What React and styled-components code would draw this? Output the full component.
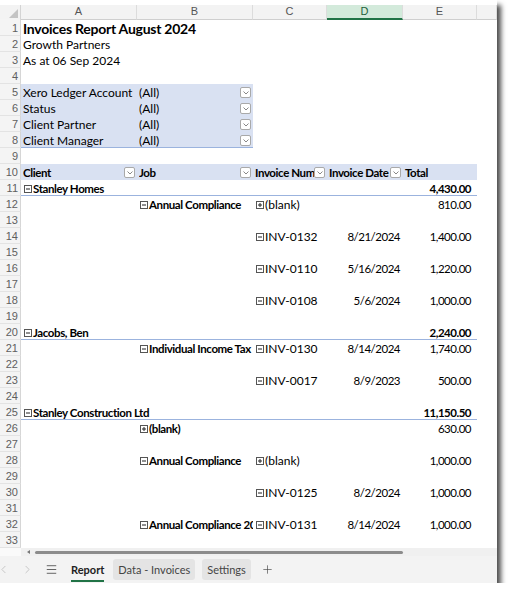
import React from 'react';
import styled, { createGlobalStyle } from 'styled-components';
import { ChevronLeft, ChevronRight, Menu, Plus } from 'lucide-react';

const GlobalStyle = createGlobalStyle`
  html, body {
    margin: 0;
    padding: 0;
    background: #fff;
  }
  body {
    font-family: 'Lato', 'Liberation Sans', sans-serif;
  }
`;

// row header, A..E, then the empty strip up to the window edge
const COLS = '21px 116px 116px 74px 76px 74px 1fr';
const LETTERS = ['A', 'B', 'C', 'D', 'E'];

// which row shows what (rows not listed stay empty)
const filter = (label, last) => ({
  a: { text: label, fill: true, line: last },
  b: { text: '(All)', fill: true, line: last, drop: true },
});

const group = (name, total) => ({
  a: { text: name, bold: true, icon: 'minus', line: true },
  b: { line: true },
  c: { line: true },
  d: { line: true },
  e: { text: total, bold: true, amount: true, line: true },
});

const invoice = (num, date, amount, extra = {}) => ({
  c: { text: num, icon: 'minus', clip: true },
  d: { text: date, date: true },
  e: { text: amount, amount: true },
  ...extra,
});

const ROWS = {
  1: { a: { text: 'Invoices Report August 2024', title: true } },
  2: { a: { text: 'Growth Partners' } },
  3: { a: { text: 'As at 06 Sep 2024' } },
  5: filter('Xero Ledger Account'),
  6: filter('Status'),
  7: filter('Client Partner'),
  8: filter('Client Manager', true),
  10: {
    a: { text: 'Client', bold: true, fill: true, drop: true },
    b: { text: 'Job', bold: true, fill: true, drop: true },
    c: { text: 'Invoice Number', bold: true, fill: true, drop: true },
    d: { text: 'Invoice Date', bold: true, fill: true, drop: true },
    e: { text: 'Total', bold: true, fill: true },
  },
  11: group('Stanley Homes', '4,430.00'),
  12: {
    b: { text: 'Annual Compliance', bold: true, icon: 'minus', clip: true },
    c: { text: '(blank)', icon: 'plus' },
    e: { text: '810.00', amount: true },
  },
  14: invoice('INV-0132', '8/21/2024', '1,400.00'),
  16: invoice('INV-0110', '5/16/2024', '1,220.00'),
  18: invoice('INV-0108', '5/6/2024', '1,000.00'),
  20: group('Jacobs, Ben', '2,240.00'),
  21: invoice('INV-0130', '8/14/2024', '1,740.00', {
    b: { text: 'Individual Income Tax', bold: true, icon: 'minus', clip: true },
  }),
  23: invoice('INV-0017', '8/9/2023', '500.00'),
  25: group('Stanley Construction Ltd', '11,150.50'),
  26: {
    b: { text: '(blank)', bold: true, icon: 'plus' },
    e: { text: '630.00', amount: true },
  },
  28: {
    b: { text: 'Annual Compliance', bold: true, icon: 'minus', clip: true },
    c: { text: '(blank)', icon: 'plus' },
    e: { text: '1,000.00', amount: true },
  },
  30: invoice('INV-0125', '8/2/2024', '1,000.00'),
  32: invoice('INV-0131', '8/14/2024', '1,000.00', {
    b: { text: 'Annual Compliance 2024', bold: true, icon: 'minus', clip: true },
  }),
};

const ExpandIcon = ({ plus }) => (
  <IconBox width="8" height="8" viewBox="0 0 8 8">
    <rect x="0.5" y="0.5" width="7" height="7" fill="#fff" stroke="#555" />
    <path d="M2 4h4" stroke="#222" />
    {plus && <path d="M4 2v4" stroke="#222" />}
  </IconBox>
);

const DropButton = () => (
  <Drop>
    <svg width="6" height="4" viewBox="0 0 6 4">
      <path d="M0.5 0.5L3 3l2.5-2.5" fill="none" stroke="#7a7a7a" strokeWidth="0.9" />
    </svg>
  </Drop>
);

const SheetCell = ({ cell = {} }) => {
  const { text, bold, title, icon, fill, line, clip, drop, amount, date } = cell;
  const kind = title ? 'title' : amount || date ? 'number' : bold ? 'bold' : 'plain';
  return (
    <Cell
      $fill={fill}
      $line={line}
      $clip={clip || drop}
      $right={amount || date}
      $pad={amount ? 6 : date ? 3 : 2}
    >
      {icon && <ExpandIcon plus={icon === 'plus'} />}
      {text && (
        <Label $kind={kind} $bold={bold || title} $shrink={drop}>
          {text}
        </Label>
      )}
      {drop && <DropButton />}
    </Cell>
  );
};

function App() {
  const rowNumbers = Array.from({ length: 33 }, (_, i) => i + 1);

  return (
    <>
      <GlobalStyle />
      <Window>
        <ColumnHeader>
          <Corner>
            <svg width="9" height="9" viewBox="0 0 9 9">
              <path d="M9 0V9H0Z" fill="#c4c4c4" />
            </svg>
          </Corner>
          {LETTERS.map((l) => (
            <ColLetter key={l} $active={l === 'D'}>
              {l}
            </ColLetter>
          ))}
          <ColLetter />
        </ColumnHeader>

        <Sheet>
          {rowNumbers.map((n) => {
            const row = ROWS[n] || {};
            return (
              <Row key={n} $tall={n === 1}>
                <RowNum>{n}</RowNum>
                <SheetCell cell={row.a} />
                <SheetCell cell={row.b} />
                <SheetCell cell={row.c} />
                <SheetCell cell={row.d} />
                <SheetCell cell={row.e} />
                <Cell />
              </Row>
            );
          })}
        </Sheet>

        <ScrollStrip>
          <ScrollTrack>
            <ScrollArrow />
            <ScrollThumb />
          </ScrollTrack>
        </ScrollStrip>

        <TabBar>
          <NavIcon $faint>
            <ChevronLeft size={13} strokeWidth={1.5} />
          </NavIcon>
          <NavIcon $faint>
            <ChevronRight size={13} strokeWidth={1.5} />
          </NavIcon>
          <NavIcon>
            <Menu size={13} strokeWidth={1.5} />
          </NavIcon>
          <Tab $active>Report</Tab>
          <Tab>Data - Invoices</Tab>
          <Tab>Settings</Tab>
          <NavIcon>
            <Plus size={13} strokeWidth={1.2} />
          </NavIcon>
        </TabBar>
      </Window>
    </>
  );
}

const Window = styled.div`
  width: 497px;
  height: 583px;
  box-sizing: border-box;
  padding-top: 5px;
  background: #fff;
  box-shadow: 4px 5px 5px rgba(0, 0, 0, 0.7);
  display: flex;
  flex-direction: column;
  overflow: hidden;
`;

const ColumnHeader = styled.div`
  display: grid;
  grid-template-columns: ${COLS};
  height: 14px;
  flex: none;
`;

const Corner = styled.div`
  background: #f3f3f3;
  border-right: 1px solid #d4d4d4;
  border-bottom: 1px solid #cfcfcf;
  box-sizing: border-box;
  display: flex;
  align-items: flex-end;
  justify-content: flex-end;
  padding: 0 2px 1px 0;
`;

const ColLetter = styled.div`
  background: ${(p) => (p.$active ? '#d3eadb' : '#f3f3f3')};
  border-right: 1px solid #dcdcdc;
  border-bottom: ${(p) => (p.$active ? '2px solid #217346' : '1px solid #cfcfcf')};
  box-sizing: border-box;
  color: ${(p) => (p.$active ? '#1f5f3a' : '#555')};
  font: 11px 'Liberation Sans', Arial, sans-serif;
  line-height: 13px;
  text-align: center;
`;

const Sheet = styled.div`
  display: flex;
  flex-direction: column;
  flex: none;
`;

const Row = styled.div`
  display: grid;
  grid-template-columns: ${COLS};
  height: ${(p) => (p.$tall ? 17 : 16)}px;
`;

const RowNum = styled.div`
  background: #f4f4f4;
  border-right: 1px solid #d6d6d6;
  border-bottom: 1px solid #e3e3e3;
  box-sizing: border-box;
  color: #5f5f5f;
  font: 11px 'Liberation Sans', Arial, sans-serif;
  display: flex;
  align-items: center;
  justify-content: flex-end;
  padding: 1px 2px 0 0;
`;

const Cell = styled.div`
  display: flex;
  align-items: center;
  justify-content: ${(p) => (p.$right ? 'flex-end' : 'flex-start')};
  min-width: 0;
  box-sizing: border-box;
  padding: 1px ${(p) => p.$pad || 2}px 0 2px;
  background: ${(p) => (p.$fill ? '#d9e1f2' : 'transparent')};
  box-shadow: ${(p) => (p.$line ? 'inset 0 -1px 0 #9bb3de' : 'none')};
  overflow: ${(p) => (p.$clip ? 'hidden' : 'visible')};
  white-space: nowrap;
`;

// Lato is wider than the sheet's font in bold and in digits, so those are tightened
const LABEL_FONTS = {
  title: 'font-size: 14px; letter-spacing: -0.25px;',
  bold: 'font-size: 11.5px; letter-spacing: -0.4px;',
  number: 'font-size: 11.5px; letter-spacing: -0.5px;',
  plain: 'font-size: 12px;',
};

const Label = styled.span`
  ${(p) => LABEL_FONTS[p.$kind]}
  font-weight: ${(p) => (p.$bold ? 700 : 400)};
  color: #000;
  line-height: 15px;
  flex: ${(p) => (p.$shrink ? '1 1 auto' : 'none')};
  min-width: 0;
  overflow: ${(p) => (p.$shrink ? 'hidden' : 'visible')};
`;

const IconBox = styled.svg`
  flex: none;
  margin: 0 1px;
`;

const Drop = styled.span`
  flex: none;
  margin-left: auto;
  width: 11px;
  height: 11px;
  box-sizing: border-box;
  border: 1px solid #a9a9a9;
  border-radius: 2px;
  background: #fff;
  display: flex;
  align-items: center;
  justify-content: center;
`;

const ScrollStrip = styled.div`
  display: grid;
  grid-template-columns: 21px 1fr;
  height: 8px;
  flex: none;
  &::before {
    content: '';
    background: #fafafa;
  }
`;

const ScrollTrack = styled.div`
  background: #f0f0f0;
  display: flex;
  align-items: center;
  padding-left: 6px;
  gap: 5px;
`;

const ScrollArrow = styled.span`
  width: 0;
  height: 0;
  border-top: 2.5px solid transparent;
  border-bottom: 2.5px solid transparent;
  border-right: 3px solid #777;
`;

const ScrollThumb = styled.span`
  width: 368px;
  height: 3px;
  border-radius: 2px;
  background: #8c8c8c;
`;

const TabBar = styled.div`
  flex: 1;
  background: #f3f3f3;
  display: flex;
  align-items: center;
  font-family: 'Lato', 'Liberation Sans', sans-serif;
`;

const NavIcon = styled.span`
  display: flex;
  align-items: center;
  justify-content: center;
  width: 24px;
  color: ${(p) => (p.$faint ? '#bdbdbd' : '#444')};
  &:first-child {
    margin-left: -9px;
  }
  &:last-child {
    margin-left: 5px;
  }
`;

const Tab = styled.span`
  position: relative;
  margin-left: ${(p) => (p.$active ? '6px' : '7px')};
  padding: 0 ${(p) => (p.$active ? '2px' : '5px')};
  height: 21px;
  line-height: 21px;
  border-radius: 3px;
  font-size: 11px;
  font-weight: ${(p) => (p.$active ? 700 : 400)};
  color: ${(p) => (p.$active ? '#222' : '#444')};
  background: ${(p) => (p.$active ? 'transparent' : '#e4e4e4')};
  &::after {
    content: '';
    display: ${(p) => (p.$active ? 'block' : 'none')};
    position: absolute;
    left: 2px;
    right: 2px;
    bottom: -2px;
    height: 2px;
    background: #217346;
  }
`;

export default App;
